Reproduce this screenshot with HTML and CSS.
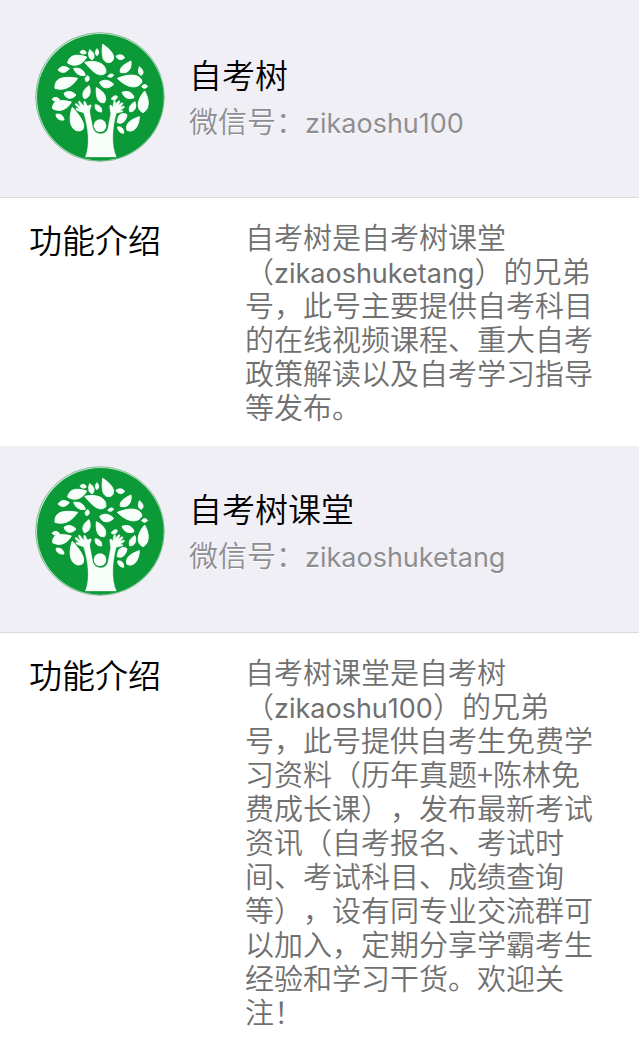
FILE: index.html
```html
<!DOCTYPE html>
<html lang="zh-CN">
<head>
    <meta charset="UTF-8">
    <meta name="viewport" content="width=device-width, initial-scale=1.0">
    <title>自考树</title>
    <link rel="stylesheet" href="styles.css">
</head>
<body>
    <!-- Tree logo, shared by both accounts -->
    <svg class="sprite" aria-hidden="true">
        <symbol id="tree" viewBox="31 30 390 390">
            <circle cx="226" cy="225" r="193" fill="#d3ead9" stroke="#4fa568" stroke-width="2"/>
            <circle cx="227" cy="226" r="190" fill="#0b9a37"/>
            <g fill="#f8fffa" stroke="#f8fffa" stroke-width="3" stroke-linejoin="round">
                <!-- Leaves, top -->
                <path d="M166 91C171 82 181 83 185 93C179 98 171 97 166 91Z"/>
                <path d="M129 123C133 100 153 94 186 105C174 128 150 137 129 123Z"/>
                <path d="M195 83C210 92 212 106 202 114C190 106 190 97 195 83Z"/>
                <path d="M217 80C224 88 223 96 217 101C210 96 211 87 217 80Z"/>
                <path d="M234 67C265 87 275 108 260 120C237 128 229 108 234 67Z"/>
                <path d="M274 103C283 96 295 97 300 107C290 116 280 114 274 103Z"/>
                <path d="M180 121C221 112 248 129 243 153C224 168 205 151 180 121Z"/>
                <path d="M319 117C322 142 309 157 287 151C284 136 298 127 319 117Z"/>
                <path d="M344 134C356 144 359 153 350 160C340 157 340 147 344 134Z"/>
                <!-- Leaves, middle -->
                <path d="M100 144C109 131 121 131 134 140C123 153 112 155 100 144Z"/>
                <path d="M147 139C168 136 178 146 182 160C166 163 153 156 147 139Z"/>
                <path d="M91 199C89 169 112 161 159 169C142 194 119 208 91 199Z"/>
                <path d="M190 161C197 170 193 179 184 178C179 170 182 165 190 161Z"/>
                <path d="M249 163C255 155 262 154 267 159C263 166 257 168 249 163Z"/>
                <path d="M225 181C238 171 254 173 267 187C253 202 232 202 225 181Z"/>
                <path d="M278 169C318 153 347 157 352 179C340 203 308 199 278 169Z"/>
                <path d="M351 194C356 186 363 186 369 193C364 200 357 201 351 194Z"/>
                <path d="M193 191C201 211 195 227 179 230C169 217 177 202 193 191Z"/>
                <path d="M215 197C238 208 250 227 239 242C219 245 213 225 215 197Z"/>
                <path d="M118 214C131 204 144 209 154 219C144 232 124 234 118 214Z"/>
                <path d="M292 211C311 204 325 213 328 227C311 234 298 227 292 211Z"/>
                <path d="M260 231C265 221 273 220 278 223C277 233 269 238 260 231Z"/>
                <!-- Leaves, bottom -->
                <path d="M82 232C90 223 99 226 105 233C97 240 88 239 82 232Z"/>
                <path d="M84 260C82 234 107 232 140 240C128 262 107 272 84 260Z"/>
                <path d="M360 207C376 235 374 263 355 272C333 262 337 233 360 207Z"/>
                <path d="M331 239C337 257 329 271 315 269C311 254 319 246 331 239Z"/>
                <path d="M212 248C226 249 232 258 231 270C217 270 209 261 212 248Z"/>
                <path d="M94 277C108 274 117 282 118 294C104 296 95 289 94 277Z"/>
                <path d="M143 256C164 279 185 307 174 323C147 338 125 305 143 256Z"/>
                <path d="M282 282C291 272 300 274 307 278C304 298 291 309 277 301Z"/>
                <path d="M344 284C343 315 326 334 307 325C300 304 320 292 344 284Z"/>
                <path d="M279 315C290 313 298 320 297 334C285 333 279 325 279 315Z"/>
            </g>
            <!-- Trunk with raised arms -->
            <path fill="#f8fffa" stroke="#f8fffa" d="M182 405C196 373 192 320 177 273C170 269 162 269 154 263C151 259 155 257 164 261L152 249C150 244 155 243 160 248L168 255L161 241C161 236 165 236 169 242L178 253L177 239C180 235 184 239 186 248L190 252C195 248 200 247 200 251C197 259 194 266 196 274L204 316C209 331 218 335 227 335C239 335 247 329 250 317L258 276L255 253C256 247 261 248 264 256L267 239C270 234 274 237 273 246L280 238C285 233 288 237 284 244L280 250L290 243C296 240 297 244 292 249L286 255L296 252C302 253 301 257 295 260L285 265C296 264 298 268 292 270L275 274C263 315 259 371 275 405Z"/>
            <circle cx="227" cy="312" r="22" fill="#0b9a37"/>
            <circle cx="226" cy="311" r="19" fill="#f8fffa"/>
        </symbol>
    </svg>

    <section class="account">
        <div class="account-header first">
            <svg class="avatar" role="img" aria-label="自考树"><use href="#tree"/></svg>
            <div class="info">
                <h2>自考树</h2>
                <p class="wechat">微信号：<span class="latin">zikaoshu100</span></p>
            </div>
        </div>
        <div class="intro">
            <h3>功能介绍</h3>
            <p>自考树是自考树课堂（<span class="latin">zikaoshuketang</span>）的兄弟号，此号主要提供自考科目的在线视频课程、重大自考政策解读以及自考学习指导等发布。</p>
        </div>
    </section>

    <section class="account">
        <div class="account-header">
            <svg class="avatar" role="img" aria-label="自考树课堂"><use href="#tree"/></svg>
            <div class="info">
                <h2>自考树课堂</h2>
                <p class="wechat">微信号：<span class="latin">zikaoshuketang</span></p>
            </div>
        </div>
        <div class="intro">
            <h3>功能介绍</h3>
            <p>自考树课堂是自考树（<span class="latin">zikaoshu100</span>）的兄弟号，此号提供自考生免费学习资料（历年真题+陈林免费成长课），发布最新考试资讯（自考报名、考试时间、考试科目、成绩查询等），设有同专业交流群可以加入，定期分享学霸考生经验和学习干货。欢迎关注！</p>
        </div>
    </section>
</body>
</html>
```
FILE: styles.css
```css
/* Global Styles */
body {
    margin: 0;
    background: #fff;
    color: #000;
    font-family: "Noto Sans CJK SC", sans-serif;
    font-weight: 350;
    text-spacing-trim: space-all;
}

h2, h3, p {
    margin: 0;
    font-weight: 350;
}

.sprite {
    display: none;
}

.latin {
    font-family: Inter, sans-serif;
    font-size: 27px;
    font-weight: 400;
    line-height: 24px;
}

/* Account header */
.account-header {
    display: flex;
    gap: 24px;
    padding: 20px 35px 36px;
    background: #f0eff5;
    border-bottom: 1px solid #d9d8dd;
}

.account-header.first {
    padding-top: 32px;
    padding-bottom: 35px;
}

.avatar {
    flex: none;
    width: 130px;
    height: 130px;
}

.info {
    padding-top: 19px;
}

.info h2 {
    font-size: 33px;
    line-height: 46px;
}

.wechat {
    font-size: 29px;
    line-height: 46px;
    color: #8e8e92;
    text-shadow: 0 1px 0 #fff;
}

/* Introduction */
.intro {
    display: flex;
    padding: 21px 42px 23px 29px;
}

.intro h3 {
    flex: none;
    width: 216px;
    font-size: 33px;
    line-height: 40px;
}

.intro p {
    flex: 1;
    font-size: 29px;
    line-height: 34px;
    color: #707070;
}
```
